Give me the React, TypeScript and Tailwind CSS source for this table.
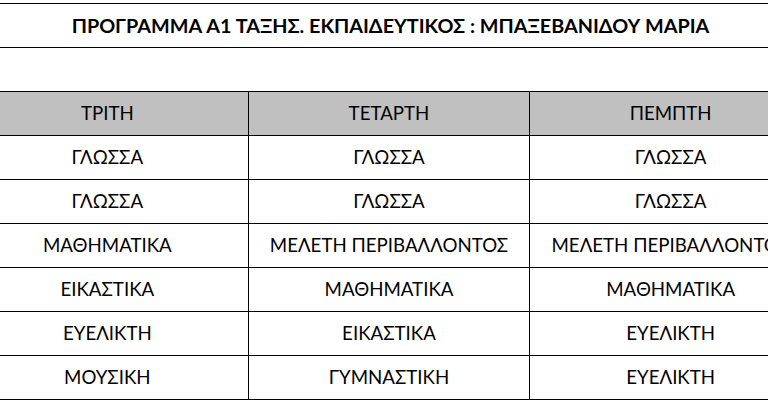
const days = ["ΤΡΙΤΗ", "ΤΕΤΑΡΤΗ", "ΠΕΜΠΤΗ"];

const rows = [
  ["ΓΛΩΣΣΑ", "ΓΛΩΣΣΑ", "ΓΛΩΣΣΑ"],
  ["ΓΛΩΣΣΑ", "ΓΛΩΣΣΑ", "ΓΛΩΣΣΑ"],
  ["ΜΑΘΗΜΑΤΙΚΑ", "ΜΕΛΕΤΗ ΠΕΡΙΒΑΛΛΟΝΤΟΣ", "ΜΕΛΕΤΗ ΠΕΡΙΒΑΛΛΟΝΤΟΣ"],
  ["ΕΙΚΑΣΤΙΚΑ", "ΜΑΘΗΜΑΤΙΚΑ", "ΜΑΘΗΜΑΤΙΚΑ"],
  ["ΕΥΕΛΙΚΤΗ", "ΕΙΚΑΣΤΙΚΑ", "ΕΥΕΛΙΚΤΗ"],
  ["ΜΟΥΣΙΚΗ", "ΓΥΜΝΑΣΤΙΚΗ", "ΕΥΕΛΙΚΤΗ"],
];

export default function App() {
  return (
    <div className="w-[768px] h-[403px] overflow-hidden bg-white text-black font-['Lato','Liberation_Sans',sans-serif]">
      {/* Title */}
      <div className="mt-[3px] h-[45px] pl-[13px] border-y border-black flex items-center justify-center">
        <h1 className="text-[19.8px] font-bold whitespace-nowrap">ΠΡΟΓΡΑΜΜΑ Α1 ΤΑΞΗΣ. ΕΚΠΑΙΔΕΥΤΙΚΟΣ : ΜΠΑΞΕΒΑΝΙΔΟΥ ΜΑΡΙΑ</h1>
      </div>

      {/* Timetable */}
      <table className="mt-[43px] ml-[-34px] w-[846px] table-fixed border-collapse text-[18.7px]">
        <thead>
          <tr className="bg-[#c0c0c0]">
            {days.map(d => (
              <th key={d} className="h-[44px] border border-black font-normal text-center">{d}</th>
            ))}
          </tr>
        </thead>
        <tbody>
          {rows.map((r, i) => (
            <tr key={i}>
              {r.map((c, j) => (
                <td key={j} className="h-[44px] border border-black text-center whitespace-nowrap overflow-hidden">{c}</td>
              ))}
            </tr>
          ))}
        </tbody>
      </table>
    </div>
  );
}
